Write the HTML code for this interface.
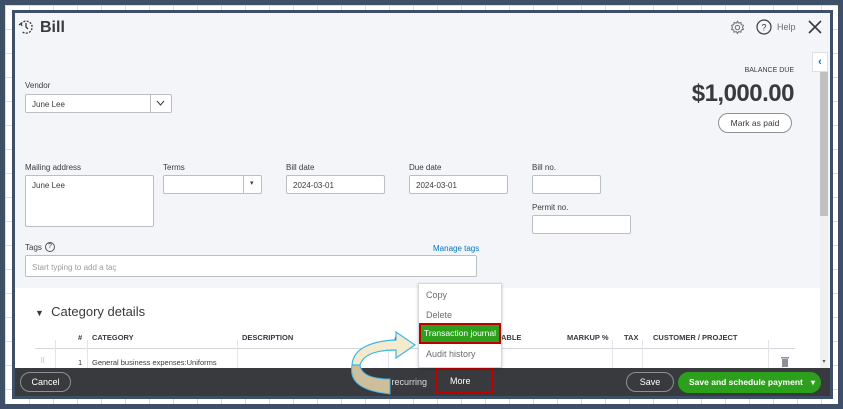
<!DOCTYPE html>
<html><head><meta charset="utf-8"><style>
*{box-sizing:border-box;margin:0;padding:0}
body{width:843px;height:409px;background:#3e5068;position:relative;overflow:hidden;font-family:"Liberation Sans",sans-serif;color:#393a3d}
.grid{position:absolute;left:5px;top:5px;width:833px;height:399px;background-color:#fff;background-image:linear-gradient(#d8dde5 1px,transparent 1px),linear-gradient(90deg,#d8dde5 1px,transparent 1px);background-size:24px 24px}
.frame{position:absolute;left:12px;top:10px;width:821px;height:389px;border:3px solid #3e5068;background:#f4f5f8;overflow:hidden}
.a{position:absolute;white-space:nowrap}
.lbl{position:absolute;font-size:8px;color:#393a3d}
.in{position:absolute;background:#fff;border:1px solid #babec5;border-radius:2px;font-size:8px;color:#393a3d;padding:5px 6px}
.th{position:absolute;top:333px;font-size:7.5px;font-weight:bold;color:#393a3d}
.vl{position:absolute;top:327px;width:1px;height:41px;background:#e3e5e8}
</style></head><body>
<div class="grid"></div>
<div class="frame">
<svg class="a" style="left:3px;top:6px" width="16" height="16" viewBox="0 0 16 16" fill="none" stroke="#393a3d" stroke-width="1.3"><path d="M3 5 A6 6 0 1 1 4 12.5" stroke-dasharray="2 1.3"/><path d="M8 4v4l2 2"/><path d="M1 6l2-1.5L4 7"/></svg>
<div class="a" style="left:25px;top:6px;font-size:16px;font-weight:bold;color:#393a3d">Bill</div>
<svg class="a" style="left:715px;top:7px" width="15" height="15" viewBox="0 0 24 24" fill="none" stroke="#6b6c72" stroke-width="1.6"><circle cx="12" cy="12" r="3.5"/><path d="M12 2l2 3 3.5-1 .5 3.5 3.5 1-1.5 3.5 1.5 3-3.5 1-.5 3.5-3.5-1-2 3-2-3-3.5 1-.5-3.5-3.5-1 1.5-3-1.5-3.5 3.5-1 .5-3.5 3.5 1z"/></svg>
<svg class="a" style="left:741px;top:6px" width="16" height="16" viewBox="0 0 16 16" fill="none" stroke="#393a3d" stroke-width="1.2"><circle cx="8" cy="8" r="7"/><text x="8" y="11.5" font-size="9" text-anchor="middle" fill="#393a3d" stroke="none" font-family="Liberation Sans">?</text></svg>
<div class="a" style="left:762px;top:9px;font-size:9px;color:#6b6c72">Help</div>
<svg class="a" style="left:792px;top:6px" width="16" height="16" viewBox="0 0 16 16" stroke="#393a3d" stroke-width="1.6"><path d="M2 2L14 14M14 2L2 14"/></svg>
<div class="a" style="left:797px;top:39px;width:16px;height:20px;background:#fff;border:1px solid #dcdfe3;color:#0077c5;font-size:11px;font-weight:bold;text-align:center;line-height:18px">‹</div>
<div class="a" style="left:805px;top:59px;width:8px;height:300px;background:#f0f0f0"></div>
<div class="a" style="left:805px;top:59px;width:8px;height:144px;background:#c1c1c1"></div>
<div class="a" style="left:805px;top:345px;width:8px;font-size:6px;color:#555;text-align:center">▾</div>

<div class="a" style="right:36px;top:54px;font-size:7px;color:#393a3d">BALANCE DUE</div>
<div class="a" style="right:36px;top:67px;font-size:24px;font-weight:bold;color:#393a3d;letter-spacing:-0.5px">$1,000.00</div>
<div class="a" style="left:703px;top:100px;width:74px;height:20px;border:1px solid #8d9096;border-radius:11px;background:#fff;font-size:8.5px;text-align:center;line-height:18px">Mark as paid</div>

<div class="lbl" style="left:10px;top:68px">Vendor</div>
<div class="in" style="left:10px;top:81px;width:147px;height:19px">June Lee</div>
<div class="a" style="left:135px;top:81px;width:1px;height:19px;background:#babec5"></div>
<svg class="a" style="left:141px;top:86px" width="9" height="8" viewBox="0 0 9 8" fill="none" stroke="#393a3d"><path d="M1 2l3.5 4L8 2"/></svg>

<div class="lbl" style="left:10px;top:150px">Mailing address</div>
<div class="in" style="left:10px;top:162px;width:129px;height:52px">June Lee</div>
<div class="lbl" style="left:148px;top:150px">Terms</div>
<div class="in" style="left:148px;top:162px;width:99px;height:19px"></div>
<div class="a" style="left:228px;top:162px;width:1px;height:19px;background:#babec5"></div>
<div class="a" style="left:235px;top:166px;font-size:7px">▾</div>
<div class="lbl" style="left:271px;top:150px">Bill date</div>
<div class="in" style="left:271px;top:162px;width:99px;height:19px">2024-03-01</div>
<div class="lbl" style="left:394px;top:150px">Due date</div>
<div class="in" style="left:394px;top:162px;width:99px;height:19px">2024-03-01</div>
<div class="lbl" style="left:517px;top:150px">Bill no.</div>
<div class="in" style="left:517px;top:162px;width:69px;height:19px"></div>
<div class="lbl" style="left:517px;top:190px">Permit no.</div>
<div class="in" style="left:517px;top:202px;width:99px;height:19px"></div>
<div class="lbl" style="left:10px;top:230px">Tags</div>
<div class="a" style="left:30px;top:229px;width:10px;height:10px;border:1px solid #555;border-radius:50%;font-size:7px;text-align:center;line-height:8px">?</div>
<div class="lbl" style="left:418px;top:231px;color:#0077c5">Manage tags</div>
<div class="in" style="left:10px;top:242px;width:452px;height:22px;color:#9a9ca1;padding-top:7px">Start typing to add a taç</div>

<div class="a" style="left:0;top:275px;width:805px;height:80px;background:#fff"></div>
<div class="a" style="left:20px;top:291px;font-size:13px;color:#393a3d"><span style="font-size:9px">▼</span>&nbsp; Category details</div>
<div class="a" style="left:20px;top:335px;width:760px;height:1px;background:#d4d7dc"></div>
<div class="vl" style="left:40px"></div><div class="vl" style="left:72px"></div><div class="vl" style="left:222px"></div><div class="vl" style="left:373px"></div><div class="vl" style="left:597px"></div><div class="vl" style="left:627px"></div><div class="vl" style="left:753px"></div>
<div class="th" style="left:63px;top:320px">#</div>
<div class="th" style="left:77px;top:320px">CATEGORY</div>
<div class="th" style="left:227px;top:320px">DESCRIPTION</div>
<div class="th" style="left:379px;top:320px">AI</div>
<div class="th" style="left:486px;top:320px">ABLE</div>
<div class="th" style="left:552px;top:320px">MARKUP %</div>
<div class="th" style="left:609px;top:320px">TAX</div>
<div class="th" style="left:638px;top:320px">CUSTOMER / PROJECT</div>
<div class="a" style="left:25px;top:344px;font-size:7px;color:#aaa">⠿</div>
<div class="a" style="left:63px;top:345px;font-size:7.5px">1</div>
<div class="a" style="left:77px;top:345px;font-size:7.5px">General business expenses:Uniforms</div>
<svg class="a" style="left:766px;top:343px" width="8" height="11" viewBox="0 0 8 11" fill="#8d9096"><rect x="0" y="1" width="8" height="1.5"/><rect x="1" y="3" width="6" height="8"/></svg>

<div class="a" style="left:0;top:355px;width:815px;height:28px;background:#393a3d"></div>
<div class="a" style="left:5px;top:359px;width:51px;height:20px;border:1px solid #8d9096;border-radius:11px;color:#fff;font-size:9px;text-align:center;line-height:18px">Cancel</div>
<div class="a" style="left:352px;top:364px;color:#ddd;font-size:9px">Make recurring</div>
<div class="a" style="left:421px;top:355px;width:57px;height:26px;border:2px solid #c00000;background:#393a3d;color:#fff;font-size:9px;line-height:22px;padding-left:12px">More</div>
<div class="a" style="left:611px;top:359px;width:48px;height:20px;border:1px solid #8d9096;border-radius:11px;color:#fff;font-size:9px;text-align:center;line-height:18px">Save</div>
<div class="a" style="left:663px;top:359px;width:143px;height:21px;border-radius:11px;background:#2ca01c;color:#fff;font-size:8.5px;font-weight:bold;line-height:21px;padding-left:11px">Save and schedule payment <span style="position:absolute;right:6px;font-size:8px">▾</span></div>

<div class="a" style="left:403px;top:270px;width:84px;height:85px;background:#fff;border:1px solid #d4d7dc;box-shadow:0 1px 3px rgba(0,0,0,.2)"></div>
<div class="a" style="left:411px;top:277px;font-size:9px;color:#6b6c72">Copy</div>
<div class="a" style="left:411px;top:297px;font-size:9px;color:#6b6c72">Delete</div>
<div class="a" style="left:404px;top:310px;width:82px;height:21px;background:#2ca01c;border:2px solid #c00000;color:#fff;font-size:8.5px;line-height:17px;padding-left:3px;overflow:hidden">Transaction journal</div>
<div class="a" style="left:411px;top:336px;font-size:9px;color:#6b6c72">Audit history</div>

<svg class="a" style="left:325px;top:315px" width="90" height="72" viewBox="325 315 90 72">
<path d="M337 352 C334 368 345 378 375 381 L375 366 C355 366 346 361 345 352 Z" fill="#cdbf9b" stroke="#3cb6e6" stroke-width="1"/>
<path d="M337 352 C338 336 355 328 381 327 L381 319 L400 332 L381 345 L381 337 C360 337 348 342 345 352 Z" fill="#f5ebcc" stroke="#3cb6e6" stroke-width="1.2"/>
</svg>
</div>
</body></html>
